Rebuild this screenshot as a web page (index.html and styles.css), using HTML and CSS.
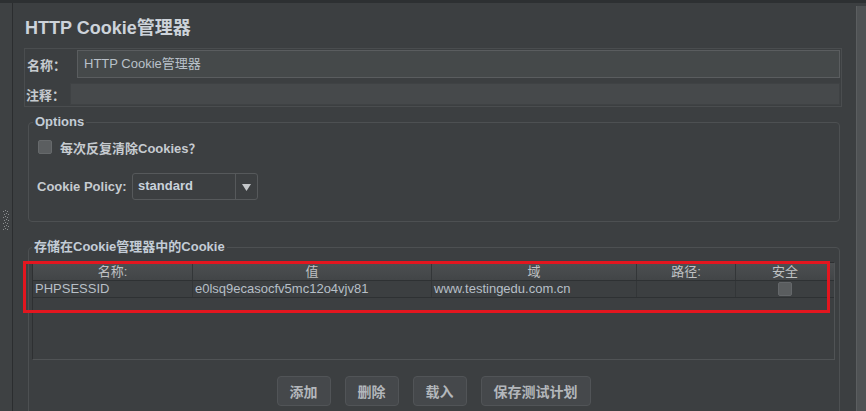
FILE: index.html
```html
<!DOCTYPE html>
<html lang="zh">
<head>
<meta charset="utf-8">
<title>HTTP Cookie管理器</title>
<link rel="stylesheet" href="styles.css">
</head>
<body>
<div class="app">
  <div class="side">
    <svg class="grip" viewBox="0 0 6 20" width="6" height="20">
      <g fill="#8b8e90">
        <rect x="0" y="1" width="1" height="1"/><rect x="2" y="0" width="1" height="1"/><rect x="4" y="1" width="1" height="1"/>
        <rect x="1" y="4" width="1" height="1"/><rect x="3" y="3" width="1" height="1"/><rect x="5" y="4" width="1" height="1"/>
        <rect x="0" y="7" width="1" height="1"/><rect x="2" y="6" width="1" height="1"/><rect x="4" y="7" width="1" height="1"/>
        <rect x="1" y="10" width="1" height="1"/><rect x="3" y="9" width="1" height="1"/><rect x="5" y="10" width="1" height="1"/>
        <rect x="0" y="13" width="1" height="1"/><rect x="2" y="12" width="1" height="1"/><rect x="4" y="13" width="1" height="1"/>
        <rect x="1" y="16" width="1" height="1"/><rect x="3" y="15" width="1" height="1"/><rect x="5" y="16" width="1" height="1"/>
        <rect x="0" y="19" width="1" height="1"/><rect x="2" y="18" width="1" height="1"/><rect x="4" y="19" width="1" height="1"/>
      </g>
    </svg>
  </div>
  <div class="main">
    <h1 class="title">HTTP Cookie管理器</h1>
    <div class="namebox">
      <div class="name-row">
        <span class="lbl lbl-name">名称：</span>
        <div class="input">HTTP Cookie管理器</div>
      </div>
      <div class="comment-row">
        <span class="lbl lbl-comment">注释：</span>
        <div class="input comment"></div>
      </div>
    </div>

    <fieldset class="group options">
      <legend>Options</legend>
      <div class="check-row">
        <span class="box"></span>
        <span>每次反复清除Cookies？</span>
      </div>
      <div class="policy-row">
        <span class="lbl policy-lbl">Cookie Policy:</span>
        <div class="combo">
          <span class="combo-val">standard</span>
          <span class="combo-arrow">
            <svg viewBox="0 0 9 7" width="9" height="7"><path d="M0 0 H9 L4.5 7 Z" fill="#c4c7ca"/></svg>
          </span>
        </div>
      </div>
    </fieldset>

    <fieldset class="group cookies">
      <legend>存储在Cookie管理器中的Cookie</legend>
      <div class="table-wrap">
        <div class="thead">
          <div class="th">名称:</div>
          <div class="th">值</div>
          <div class="th">域</div>
          <div class="th">路径:</div>
          <div class="th">安全</div>
        </div>
        <div class="trow">
          <div class="td">PHPSESSID</div>
          <div class="td">e0lsq9ecasocfv5mc12o4vjv81</div>
          <div class="td">www.testingedu.com.cn</div>
          <div class="td"></div>
          <div class="td td-check"><span class="cell-box"></span></div>
        </div>
        <div class="highlight"></div>
      </div>
      <div class="buttons">
        <button class="btn">添加</button>
        <button class="btn">删除</button>
        <button class="btn">载入</button>
        <button class="btn">保存测试计划</button>
      </div>
    </fieldset>
  </div>
  <div class="scroll"></div>
</div>
</body>
</html>
```

FILE: styles.css
```css
* { box-sizing: border-box; }
html, body { margin: 0; padding: 0; }
body {
  background: #3c3f41;
  font-family: "Liberation Sans", "Noto Sans CJK SC", sans-serif;
  font-size: 13px;
  color: #bbbbbb;
}
.app {
  display: flex;
  width: 866px;
  height: 411px;
  border-top: 3px solid #2d3032;
  overflow: hidden;
}
.side {
  width: 13px;
  flex: none;
  background: #3e4143;
  border-right: 1px solid #2b2d2f;
  display: flex;
  justify-content: center;
  align-items: center;
  padding-top: 26px;
}
.grip { display: block; }
.main {
  flex: 1;
  min-width: 0;
  padding: 14px 14px 0 11px;
}
.scroll {
  width: 10px;
  flex: none;
  margin-top: 3px;
  background: #4f5254;
  border-left: 1px solid #5b5e60;
}
.title {
  margin: 0;
  padding-left: 1px;
  font-size: 18px;
  line-height: 22px;
  font-weight: bold;
  color: #cdd3da;
}
.namebox {
  margin-top: 9px;
  border: 1px solid #4a4d4f;
  padding: 1px;
}
.name-row, .comment-row { display: flex; align-items: center; }
.name-row { height: 28px; }
.comment-row { height: 22px; margin-top: 5px; }
.lbl {
  font-weight: bold;
  font-size: 13px;
  color: #c6cbd0;
  white-space: nowrap;
}
.lbl-name { width: 51px; padding-left: 1px; }
.lbl-comment { width: 44px; }
.input {
  flex: 1;
  height: 28px;
  background: #45494a;
  border: 1px solid #5a5d5f;
  padding-left: 6px;
  line-height: 26px;
  color: #b9c1c9;
  font-size: 13px;
}
.input.comment {
  height: 22px;
  border-color: #3f4244;
  background: #46494b;
}
.group {
  margin: 0;
  border: 1px solid #4d5052;
  border-radius: 4px;
  min-width: 0;
}
.group legend {
  padding: 0 2px;
  font-weight: bold;
  font-size: 13px;
  line-height: 16px;
  color: #c3ccd6;
}
.options {
  margin: 7px 2px 0 4px;
  padding: 0 4px 21px 4px;
}
.check-row {
  margin-top: 8px;
  height: 18px;
  display: flex;
  align-items: center;
  gap: 8px;
  padding-left: 5px;
  font-weight: bold;
  color: #c6cbd0;
}
.box {
  width: 14px;
  height: 14px;
  background: #5b5e60;
  border: 1px solid #66696b;
  border-radius: 2px;
}
.policy-row {
  margin-top: 17px;
  height: 27px;
  display: flex;
  align-items: center;
  padding-left: 4px;
}
.policy-lbl { width: 95px; }
.combo {
  width: 126px;
  height: 27px;
  display: flex;
  border: 1px solid #56595b;
  border-radius: 3px;
}
.combo-val {
  flex: 1;
  padding-left: 5px;
  line-height: 23px;
  font-weight: bold;
  color: #c9d2dc;
  border-right: 1px solid #56595b;
}
.combo-arrow {
  width: 21px;
  display: flex;
  align-items: center;
  justify-content: center;
  padding-top: 2px;
}
.cookies {
  margin: 17px 2px 0 4px;
  padding: 0 4px 20px 3px;
}
.table-wrap {
  position: relative;
  margin-top: 7px;
  height: 98px;
  border: 1px solid #505355;
  border-top-color: #2e3032;
  border-left-color: #2e3032;
}
.thead, .trow {
  display: grid;
  grid-template-columns: 160px 239px 205px 99px 1fr;
}
.thead {
  height: 18px;
  background: linear-gradient(#4c4f51, #424547);
  border-bottom: 1px solid #2e3133;
}
.th {
  text-align: center;
  line-height: 17px;
  color: #bfc1c3;
  border-right: 1px solid #333638;
}
.th:last-child { border-right: none; }
.trow {
  height: 17px;
  border-bottom: 1px solid #2e3133;
}
.td {
  padding-left: 2px;
  line-height: 16px;
  color: #b7bfc7;
  border-right: 1px solid #333638;
  white-space: nowrap;
  overflow: hidden;
}
.td:last-child { border-right: none; }
.td-check {
  display: flex;
  justify-content: center;
  align-items: center;
  padding-left: 0;
}
.cell-box {
  width: 14px;
  height: 14px;
  background: #5a5d5f;
  border: 1px solid #64676a;
  border-radius: 2px;
}
.highlight {
  position: absolute;
  left: -10px;
  top: -2px;
  width: 807px;
  height: 52px;
  border: 3px solid #e3161f;
  pointer-events: none;
}
.buttons {
  margin-top: 16px;
  display: flex;
  justify-content: center;
  gap: 14px;
}
.btn {
  height: 30px;
  padding: 0 12px;
  font-family: "Noto Sans CJK SC", sans-serif;
  font-weight: bold;
  font-size: 14px;
  color: #b3b7bb;
  background: #45484b;
  border: 1px solid #515457;
  border-radius: 4px;
}
```
